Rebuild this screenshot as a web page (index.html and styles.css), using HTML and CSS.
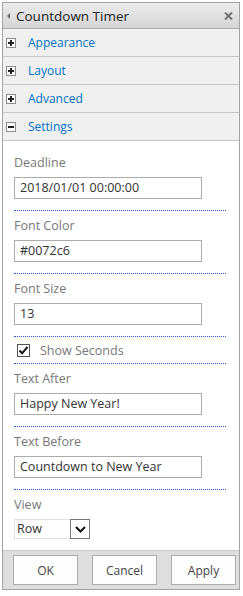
FILE: index.html
```
<!DOCTYPE html>
<html lang="en">
<head>
    <meta charset="UTF-8">
    <meta name="viewport" content="width=device-width, initial-scale=1.0">
    <title>Countdown Timer</title>
    <link rel="stylesheet" href="styles.css">
</head>
<body>
    <div class="panel">
        <!-- Header -->
        <div class="panel-header">
            <span class="collapse-arrow"></span>
            <span class="panel-title">Countdown Timer</span>
            <svg class="close-icon" width="9" height="8" viewBox="0 0 9 8">
                <path d="M1 0.5 L8 7.5 M8 0.5 L1 7.5" stroke="#707070" stroke-width="2"/>
            </svg>
        </div>

        <!-- Collapsible groups -->
        <div class="group-row">
            <span class="toggle-box"><span class="h"></span><span class="v"></span></span>
            <span class="group-title">Appearance</span>
        </div>
        <div class="group-row">
            <span class="toggle-box"><span class="h"></span><span class="v"></span></span>
            <span class="group-title">Layout</span>
        </div>
        <div class="group-row">
            <span class="toggle-box"><span class="h"></span><span class="v"></span></span>
            <span class="group-title">Advanced</span>
        </div>
        <div class="group-row">
            <span class="toggle-box"><span class="h"></span></span>
            <span class="group-title">Settings</span>
        </div>

        <!-- Settings body -->
        <div class="settings">
            <div class="field">
                <label class="field-label">Deadline</label>
                <div class="text-box">2018/01/01 00:00:00</div>
            </div>
            <div class="field">
                <label class="field-label">Font Color</label>
                <div class="text-box">#0072c6</div>
            </div>
            <div class="field">
                <label class="field-label">Font Size</label>
                <div class="text-box">13</div>
            </div>
            <div class="field check-field">
                <span class="check-box">
                    <svg width="11" height="11" viewBox="0 0 11 11">
                        <path d="M1.5 5.5 L4.2 8.3 L9.5 1.8" fill="none" stroke="#111" stroke-width="2"/>
                    </svg>
                </span>
                <span class="check-label">Show Seconds</span>
            </div>
            <div class="field">
                <label class="field-label">Text After</label>
                <div class="text-box">Happy New Year!</div>
            </div>
            <div class="field">
                <label class="field-label">Text Before</label>
                <div class="text-box">Countdown to New Year</div>
            </div>
            <div class="field last">
                <label class="field-label">View</label>
                <div class="select-box">
                    <span class="select-value">Row</span>
                    <span class="select-btn">
                        <svg width="11" height="7" viewBox="0 0 11 7">
                            <path d="M1 1 L5.5 5.5 L10 1" fill="none" stroke="#111" stroke-width="2"/>
                        </svg>
                    </span>
                </div>
            </div>
        </div>

        <!-- Footer buttons -->
        <div class="panel-footer">
            <button class="btn">OK</button>
            <button class="btn">Cancel</button>
            <button class="btn">Apply</button>
        </div>
    </div>
</body>
</html>
```

FILE: styles.css
```
* {
    margin: 0;
    padding: 0;
    box-sizing: border-box;
}

body {
    font-family: "Open Sans", Arial, sans-serif;
    background: #fff;
    color: #444;
}

.panel {
    width: 238px;
    margin: 2px 0 0 2px;
    border: 1px solid #a3a3a3;
    background: #fff;
}

.panel-header {
    display: flex;
    align-items: center;
    height: 26px;
    padding: 0 6px 0 4px;
    background: linear-gradient(#ececec, #d5d5d5);
    border-bottom: 1px solid #a9a9a9;
}

.collapse-arrow {
    width: 0;
    height: 0;
    border-top: 3px solid transparent;
    border-bottom: 3px solid transparent;
    border-right: 3px solid #6a6a6a;
    margin-right: 6px;
}

.panel-title {
    flex: 1;
    font-size: 13.5px;
    color: #222;
    line-height: 24px;
}

.close-icon {
    display: block;
}

.group-row {
    display: flex;
    align-items: center;
    height: 28px;
    background: #f0f0f0;
    border-bottom: 1px solid #c6c6c6;
}

.toggle-box {
    position: relative;
    width: 10px;
    height: 10px;
    margin: 0 12px 0 3px;
    border: 1px solid #8a8a8a;
    background: #fff;
}

.toggle-box .h {
    position: absolute;
    left: 1px;
    top: 3px;
    width: 6px;
    height: 2px;
    background: #222;
}

.toggle-box .v {
    position: absolute;
    left: 3px;
    top: 1px;
    width: 2px;
    height: 6px;
    background: #222;
}

.group-title {
    font-size: 12px;
    color: #0072c6;
}

.settings {
    padding: 7px 13px 11px 11px;
}

.field {
    padding: 6px 0 11px;
    border-bottom: 1px dotted #2a5bd6;
}

.field.last {
    border-bottom: none;
    padding-bottom: 0;
}

.field-label {
    display: block;
    font-size: 12.5px;
    line-height: 18px;
    color: #777;
    margin-bottom: 5px;
}

.text-box {
    width: 188px;
    height: 22px;
    padding: 0 5px;
    border: 1px solid #ababab;
    font-size: 12.5px;
    line-height: 20px;
    color: #333;
    white-space: nowrap;
}

.check-field {
    display: flex;
    align-items: center;
    height: 27px;
    padding: 0 0 0 3px;
}

.check-box {
    display: flex;
    align-items: center;
    justify-content: center;
    width: 13px;
    height: 13px;
    border: 1px solid #555;
    background: #fff;
    margin-right: 10px;
}

.check-label {
    font-size: 12.5px;
    color: #777;
}

.select-box {
    display: flex;
    width: 76px;
    height: 20px;
    border: 1px solid #e1e1e1;
}

.select-value {
    flex: 1;
    padding-left: 2px;
    font-size: 12.5px;
    line-height: 18px;
    color: #333;
}

.select-btn {
    display: flex;
    align-items: center;
    justify-content: center;
    width: 20px;
    border: 1px solid #777;
    background: #fff;
    margin: -1px -1px -1px 0;
}

.panel-footer {
    display: flex;
    gap: 14px;
    padding: 4px 0 4px 10px;
    background: #dedede;
    border-top: 1px solid #c9c9c9;
}

.btn {
    width: 65px;
    height: 30px;
    border: 1px solid #ababab;
    background: #fdfdfd;
    font-family: "Open Sans", Arial, sans-serif;
    font-size: 12px;
    color: #444;
}
```
